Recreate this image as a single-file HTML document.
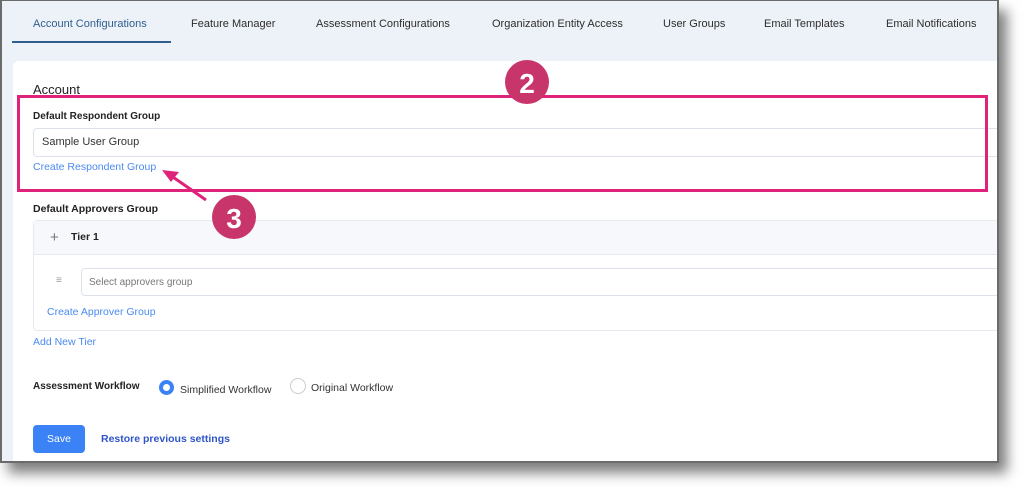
<!DOCTYPE html>
<html><head><meta charset="utf-8"><style>
*{box-sizing:border-box;margin:0;padding:0}
body{width:1024px;height:487px;background:#fff;font-family:"Liberation Sans",sans-serif;position:relative;overflow:hidden}
.frame{position:absolute;left:0;top:0;width:999px;height:463px;border:2px solid #6b6b6b;border-top-width:1px;background:#edf2f8;overflow:hidden;box-shadow:8px 10px 12px rgba(0,0,0,.5)}
.in{position:absolute;left:-2px;top:0;width:1010px;height:470px}
.tab{position:absolute;top:17px;font-size:11px;color:#2d2d2d}
.tab.a{color:#2f5f8f}
.ul{position:absolute;left:12px;top:40px;width:159px;height:2px;background:#2f5f8f}
.card{position:absolute;left:13px;top:60px;width:1000px;height:420px;background:#fff;border-radius:6px}
.t{position:absolute;font-size:11px;color:#333}
.b{font-weight:bold;color:#222}
.lnk{color:#4a8af0}
.inp{position:absolute;border:1px solid #dde2ea;border-radius:4px;background:#fff}
</style></head><body>
<div class="frame"><div class="in">
<span class="tab a" style="left:33px">Account Configurations</span>
<span class="tab" style="left:191px">Feature Manager</span>
<span class="tab" style="left:316px">Assessment Configurations</span>
<span class="tab" style="left:492px">Organization Entity Access</span>
<span class="tab" style="left:663px">User Groups</span>
<span class="tab" style="left:764px">Email Templates</span>
<span class="tab" style="left:886px">Email Notifications</span>
<div class="ul"></div>
<div class="card"></div>
<div class="t" style="left:33px;top:81px;font-size:13px;color:#222">Account</div>
<div class="t b" style="left:33px;top:110px;font-size:10px">Default Respondent Group</div>
<div class="inp" style="left:33px;top:127px;width:980px;height:29px"></div>
<div class="t" style="left:42px;top:135px">Sample User Group</div>
<div class="t lnk" style="left:33px;top:160px;font-size:10.5px">Create Respondent Group</div>
<div class="t b" style="left:33px;top:202px;font-size:10.5px">Default Approvers Group</div>
<div class="inp" style="left:33px;top:219px;width:980px;height:111px;border-color:#e6eaf0"></div>
<div style="position:absolute;left:34px;top:220px;width:978px;height:34px;background:#f6f8fb;border-bottom:1px solid #e6eaf0"></div>
<div class="t" style="left:50px;top:228px;font-size:15px;color:#777">+</div>
<div class="t b" style="left:71px;top:230px;font-size:10.5px">Tier 1</div>
<div class="t" style="left:56px;top:274px;font-size:10px;color:#999">≡</div>
<div class="inp" style="left:81px;top:267px;width:930px;height:28px"></div>
<div class="t" style="left:89px;top:276px;font-size:10px;color:#777">Select approvers group</div>
<div class="t lnk" style="left:47px;top:305px;font-size:10.5px">Create Approver Group</div>
<div class="t lnk" style="left:33px;top:335px;font-size:10.5px">Add New Tier</div>
<div class="t b" style="left:33px;top:380px;font-size:10px">Assessment Workflow</div>
<div style="position:absolute;left:159px;top:379px;width:15px;height:15px;border-radius:50%;border:4px solid #3b82f6"></div>
<div class="t" style="left:180px;top:383px;font-size:10.5px">Simplified Workflow</div>
<div style="position:absolute;left:290px;top:377px;width:16px;height:16px;border-radius:50%;border:1px solid #ccc"></div>
<div class="t" style="left:311px;top:381px;font-size:10.5px">Original Workflow</div>
<div style="position:absolute;left:33px;top:424px;width:52px;height:28px;border-radius:4px;background:#3b82f6;color:#fff;font-size:10.5px;text-align:center;line-height:28px">Save</div>
<div class="t b" style="left:101px;top:432px;font-size:10.5px;color:#2f55c8">Restore previous settings</div>
</div></div>
<div style="position:absolute;left:17px;top:95px;width:971px;height:97px;border:3px solid #e0237a"></div>
<svg style="position:absolute;left:0;top:0" width="1024" height="487">
<circle cx="527" cy="82" r="22" fill="#c8356a"/>
<text x="527" y="93" font-family="Liberation Sans" font-size="28" font-weight="bold" fill="#fff" text-anchor="middle">2</text>
<line x1="206" y1="200" x2="170" y2="175" stroke="#e0237a" stroke-width="3"/>
<polygon points="162,170 179,172 171,182" fill="#e0237a"/>
<circle cx="234" cy="217" r="22" fill="#c8356a"/>
<text x="234" y="228" font-family="Liberation Sans" font-size="28" font-weight="bold" fill="#fff" text-anchor="middle">3</text>
</svg>
</body></html>
